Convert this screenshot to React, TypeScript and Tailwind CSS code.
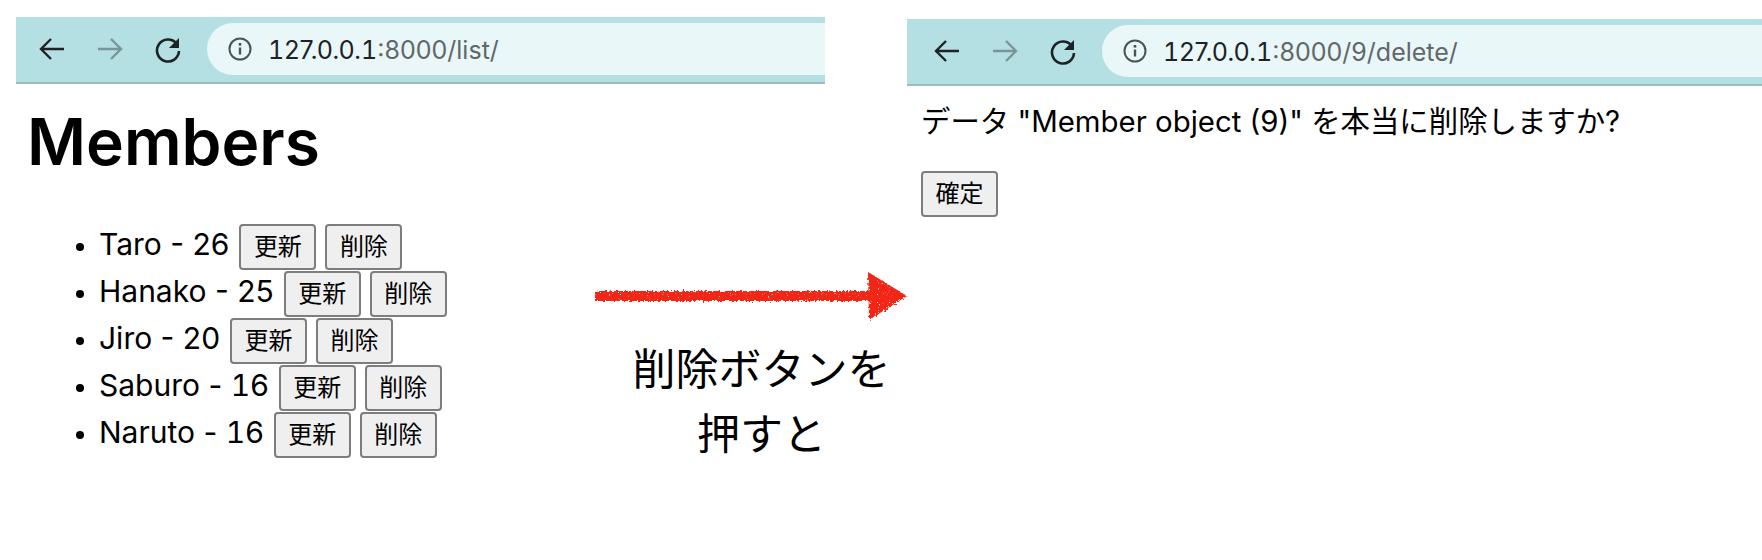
const font = { fontFamily: '"Inter", "Noto Sans CJK JP", sans-serif' };

function Digits({ text }: { text: string }) {
  return (
    <>
      {text.split(/(1)/).map((part, i) =>
        part === "1" ? (
          <span key={i} className="tabular-nums">1</span>
        ) : (
          <span key={i}>{part}</span>
        ),
      )}
    </>
  );
}

function Bar({ path, wide }: { path: string; wide?: boolean }) {
  return (
    <div className={`flex h-[67px] items-center border-b-2 border-[#9cbcc0] bg-[#b5e0e3] pb-px ${wide ? "pl-[26px]" : "pl-[22px]"}`}>
      <svg width="28" height="28" viewBox="0 0 28 28" fill="none" stroke="#1f2224" strokeWidth="2.4">
        <path d="M26 14H3M13 4 3 14l10 10" />
      </svg>
      <svg className="ml-[30px]" width="28" height="28" viewBox="0 0 28 28" fill="none" stroke="#7a9598" strokeWidth="2.4">
        <path d="M2 14h23M15 4l10 10-10 10" />
      </svg>
      <svg className="ml-[30px]" width="28" height="28" viewBox="0 0 28 28" fill="none" stroke="#1f2224" strokeWidth="2.6">
        <path d="M22.5 8.5A11 11 0 1 0 25 16" />
        <path d="M25 3v10H15z" fill="#1f2224" stroke="none" />
      </svg>
      <div className="ml-[25px] flex h-[52px] flex-1 items-center rounded-l-[26px] bg-[#e9f7f8] pl-[20px]">
        <svg width="26" height="26" viewBox="0 0 26 26" fill="none" stroke="#4d5355" strokeWidth="2">
          <circle cx="13" cy="13" r="10.5" />
          <path d="M13 11.5v7" strokeWidth="2.4" />
          <path d="M13 7v2.6" strokeWidth="2.6" />
        </svg>
        <span className="ml-[15px] whitespace-nowrap pt-[3px] text-[25px] text-[#202124]">
          <Digits text="127.0.0.1" /><span className="text-[#62676a]">{path}</span>
        </span>
      </div>
    </div>
  );
}

function Btn({ label }: { label: string }) {
  return (
    <button className="h-[46px] w-[77px] rounded-[4px] border-2 border-[#7d7d7d] bg-[#efefef] text-[24px] leading-none text-black">
      {label}
    </button>
  );
}

const members = ["Taro - 26", "Hanako - 25", "Jiro - 20", "Saburo - 16", "Naruto - 16"];

export default function App() {
  return (
    <div className="relative flex h-[560px] w-[1762px] overflow-hidden bg-white pt-[17px] text-black" style={font}>
      <section className="ml-[16px] w-[809px]">
        <Bar path=":8000/list/" />
        <h1 className="ml-[11px] mt-[14px] text-[64px] font-semibold leading-[88px]">Members</h1>
        <ul className="ml-[60px] mt-[37px] text-[30px]">
          {members.map((m) => (
            <li key={m} className="flex h-[47px] items-center gap-[9px]">
              <span className="mr-[6px] h-[8px] w-[8px] rounded-full bg-black" />
              <span className="mr-[1px] -translate-y-[2px] whitespace-nowrap"><Digits text={m} /></span>
              <Btn label="更新" />
              <Btn label="削除" />
            </li>
          ))}
        </ul>
      </section>
      <section className="ml-[82px] mt-[2px] flex-1">
        <Bar path=":8000/9/delete/" wide />
        <p className="ml-[14px] mt-[15px] whitespace-nowrap text-[29.4px] leading-[42px]">データ "Member object (9)" を本当に削除しますか?</p>
        <div className="ml-[14px] mt-[28px]">
          <button className="h-[46px] w-[77px] rounded-[4px] border-2 border-[#7d7d7d] bg-[#efefef] text-[24px] leading-none text-black">確定</button>
        </div>
      </section>
      <div className="absolute left-[594px] top-[269px] w-[330px]">
        <svg width="330" height="54" viewBox="0 0 330 54">
          <defs>
            <filter id="rough" x="-5%" y="-20%" width="110%" height="140%">
              <feTurbulence type="fractalNoise" baseFrequency="0.45" numOctaves="2" seed="4" result="n" />
              <feDisplacementMap in="SourceGraphic" in2="n" scale="5" result="d" />
              <feTurbulence type="fractalNoise" baseFrequency="0.9" numOctaves="1" seed="9" />
              <feColorMatrix values="0 0 0 0 0  0 0 0 0 0  0 0 0 0 0  0 0 0 -9 7" result="m" />
              <feComposite in="d" in2="m" operator="in" />
            </filter>
          </defs>
          <g filter="url(#rough)" fill="#f22613">
            <rect x="1" y="22" width="275" height="10" />
            <path d="M274 3 L313 27 L275 51 Z" />
          </g>
        </svg>
      </div>
      <div className="absolute left-[602px] top-[334px] w-[319px] text-center text-[43px] leading-[65px]" style={{ fontFamily: '"Noto Sans CJK JP", sans-serif' }}>
        削除ボタンを
        <br />
        押すと
      </div>
    </div>
  );
}
